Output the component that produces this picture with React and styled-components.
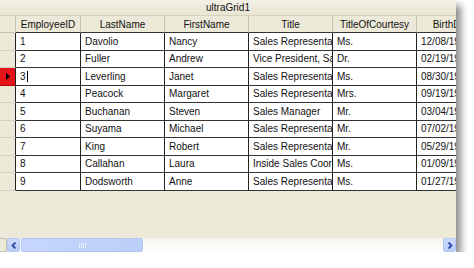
import styled, { createGlobalStyle } from "styled-components";

const GlobalStyle = createGlobalStyle`
  body {
    margin: 0;
    background: #fff;
    font-family: "Liberation Sans", Arial, sans-serif;
  }
`;

const COLS = "16px 65px 84px 84px 84px 84px 74px";

const columns = ["EmployeeID", "LastName", "FirstName", "Title", "TitleOfCourtesy", "BirthDate"];

const rows = [
  ["1", "Davolio", "Nancy", "Sales Representative", "Ms.", "12/08/1948"],
  ["2", "Fuller", "Andrew", "Vice President, Sales", "Dr.", "02/19/1952"],
  ["3", "Leverling", "Janet", "Sales Representative", "Ms.", "08/30/1963"],
  ["4", "Peacock", "Margaret", "Sales Representative", "Mrs.", "09/19/1937"],
  ["5", "Buchanan", "Steven", "Sales Manager", "Mr.", "03/04/1955"],
  ["6", "Suyama", "Michael", "Sales Representative", "Mr.", "07/02/1963"],
  ["7", "King", "Robert", "Sales Representative", "Mr.", "05/29/1960"],
  ["8", "Callahan", "Laura", "Inside Sales Coordinator", "Ms.", "01/09/1958"],
  ["9", "Dodsworth", "Anne", "Sales Representative", "Ms.", "01/27/1966"],
];

// CSS
const Panel = styled.div`
  width: 456px;
  height: 252px;
  display: flex;
  flex-direction: column;
  overflow: hidden;
  background: #ece9d8;
  box-shadow: 5px 5px 7px rgba(0, 0, 0, 0.45);
`;

const Caption = styled.div`
  height: 16px;
  display: flex;
  align-items: center;
  justify-content: center;
  font-size: 10px;
  color: #111;
  background: linear-gradient(#f3f1e6, #e9e6d4);
  border-bottom: 1px solid #d6d2c0;
  box-sizing: border-box;
`;

const Grid = styled.div`
  flex: 1;
  display: flex;
  flex-direction: column;
  overflow: hidden;
`;

const Row = styled.div`
  display: grid;
  grid-template-columns: ${COLS};
  height: ${(props) => props.h || "17.5px"};
  flex-shrink: 0;
`;

const HeadCell = styled.div`
  box-sizing: border-box;
  display: flex;
  align-items: center;
  justify-content: center;
  font-size: 10px;
  color: #111;
  white-space: nowrap;
  overflow: hidden;
  background: #ece9d8;
  border-right: 1px solid #c4c0ac;
  border-bottom: 1px solid ${(props) => (props.selector ? "#c4c0ac" : "#333")};
`;

const Selector = styled.div`
  box-sizing: border-box;
  display: flex;
  align-items: center;
  justify-content: center;
  background: ${(props) => (props.active ? "#e4141a" : "#ece9d8")};
  border-right: 1px solid #222;
  border-bottom: 1px solid ${(props) => (props.active ? "#b00" : "#d6d2c0")};
`;

const Cell = styled.div`
  box-sizing: border-box;
  display: flex;
  align-items: center;
  padding-left: 4px;
  font-size: 10px;
  color: #111;
  white-space: nowrap;
  overflow: hidden;
  background: #fff;
  border-right: 1px solid #222;
  border-bottom: 1px solid #333;
`;

const Caret = styled.span`
  display: inline-block;
  width: 1px;
  height: 11px;
  margin-left: 1px;
  background: #000;
`;

const Scrollbar = styled.div`
  height: 14px;
  display: flex;
  align-items: stretch;
  background: linear-gradient(#f5f4ef, #fefefe);
`;

const SplitBox = styled.div`
  width: 7px;
  box-sizing: border-box;
  background: #ece9d8;
  border: 1px solid #c4c0ac;
  border-left: none;
`;

const ArrowButton = styled.div`
  width: 13px;
  box-sizing: border-box;
  display: flex;
  align-items: center;
  justify-content: center;
  background: linear-gradient(#cddafc, #b9cdf7);
  border: 1px solid #b4c8f6;
  border-radius: 2px;
`;

const Thumb = styled.div`
  width: 122px;
  margin-left: 1px;
  box-sizing: border-box;
  display: flex;
  align-items: center;
  justify-content: center;
  gap: 1px;
  background: linear-gradient(90deg, #c6d6fc, #bccff8);
  border: 1px solid #b0c6f5;
  border-radius: 2px;
`;

const Grip = styled.span`
  width: 1px;
  height: 5px;
  background: #e6eefe;
`;

const Track = styled.div`
  flex: 1;
`;

function Chevron({ left }) {
  return (
    <svg width="6" height="7" viewBox="0 0 6 7">
      <path
        d={left ? "M4.5 0.5 L1.5 3.5 L4.5 6.5" : "M1.5 0.5 L4.5 3.5 L1.5 6.5"}
        fill="none"
        stroke="#2b47a8"
        strokeWidth="1.8"
      />
    </svg>
  );
}

function App() {
  return (
    <>
      <GlobalStyle />
      <Panel>
        <Caption>ultraGrid1</Caption>
        <Grid>
          <Row h="17px">
            <HeadCell selector />
            {columns.map((c) => (
              <HeadCell key={c}>{c}</HeadCell>
            ))}
          </Row>
          {rows.map((r, i) => (
            <Row key={r[0]}>
              <Selector active={i === 2}>
                {i === 2 && (
                  <svg width="4" height="7" viewBox="0 0 4 7">
                    <path d="M0 0 L4 3.5 L0 7 Z" fill="#000" />
                  </svg>
                )}
              </Selector>
              {r.map((v, j) => (
                <Cell key={j}>
                  {v}
                  {i === 2 && j === 0 && <Caret />}
                </Cell>
              ))}
            </Row>
          ))}
        </Grid>
        <Scrollbar>
          <SplitBox />
          <ArrowButton>
            <Chevron left />
          </ArrowButton>
          <Thumb>
            <Grip />
            <Grip />
            <Grip />
            <Grip />
          </Thumb>
          <Track />
          <ArrowButton>
            <Chevron />
          </ArrowButton>
        </Scrollbar>
      </Panel>
    </>
  );
}

export default App;
